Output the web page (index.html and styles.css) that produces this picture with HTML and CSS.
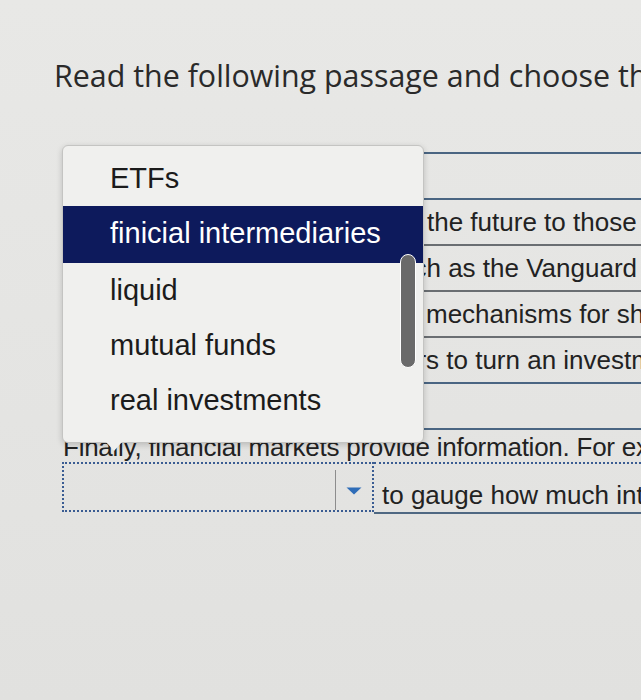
FILE: index.html
```html
<!DOCTYPE html>
<html lang="en">
<head>
<meta charset="utf-8">
<title>Passage question</title>
<link rel="stylesheet" href="styles.css">
</head>
<body>
<main class="page">
  <h1 class="title">Read the following passage and choose the best answer for each blank.</h1>
  <section class="passage">
    <div class="row blue"></div>
    <div class="row blue"><span class="line line-a">the future to those who need funds today.</span></div>
    <div class="row"><span class="line line-b">such as the Vanguard 500 Index Fund,</span></div>
    <div class="row"><span class="line line-c">mechanisms for sharing risk.</span></div>
    <div class="row"><span class="line line-d">investors to turn an investment into cash.</span></div>
    <div class="row blue"></div>
    <div class="row blue row-plain"><span class="line line-e">Finally, financial markets provide information. For example,</span></div>
    <div class="select-row">
      <div class="select">
        <span class="select-value"></span>
        <span class="select-arrow"><svg width="16" height="8" viewBox="0 0 16 8"><path d="M0.5 0.5 L15.5 0.5 L8 7.5 Z" fill="#2f6db8"/></svg></span>
      </div>
      <div class="after"><span class="line">to gauge how much interest rates will change.</span></div>
    </div>

    <div class="menu" role="listbox">
      <div class="option">ETFs</div>
      <div class="option selected">finicial intermediaries</div>
      <div class="option">liquid</div>
      <div class="option">mutual funds</div>
      <div class="option">real investments</div>
      <div class="thumb"></div>
      <div class="notch"></div>
    </div>
  </section>
</main>
</body>
</html>
```
FILE: styles.css
```css
html, body {
  margin: 0;
  padding: 0;
}
body {
  width: 641px;
  height: 700px;
  overflow: hidden;
  background: linear-gradient(180deg, #e8e8e6 0%, #e4e4e2 60%, #e1e1df 100%);
  font-family: "Liberation Sans", Arial, sans-serif;
  color: #222;
}
.page {
  width: 641px;
}
.title {
  margin: 58px 0 0 0;
  padding-left: 54px;
  font-family: "Open Sans", "Noto Sans", sans-serif;
  font-weight: 400;
  font-size: 30.4px;
  line-height: 36px;
  color: #2a2a2a;
  white-space: nowrap;
  overflow: hidden;
}
.passage {
  position: relative;
  margin-top: 58px;
}
.row {
  height: 44px;
  margin-left: 62px;
  border-top: 2px solid #6a6e72;
  display: flex;
  align-items: center;
  white-space: nowrap;
  overflow: hidden;
  font-size: 26px;
  line-height: 44px;
}
.row.blue {
  border-top-color: #4a6582;
}
.line {
  white-space: nowrap;
}
.line-a { padding-left: 365px; }
.line-b { padding-left: 324px; }
.line-c { padding-left: 364px; }
.line-d { padding-left: 273px; }
.row-plain {
  height: 30px;
  padding-top: 2px;
  line-height: 30px;
  align-items: flex-start;
}
.line-e {
  padding-left: 1px;
  letter-spacing: -0.25px;
}
.select-row {
  display: flex;
  height: 52px;
}
.select {
  width: 308px;
  height: 46px;
  margin-left: 62px;
  border: 2px dotted #3a5c92;
  display: flex;
  justify-content: flex-end;
}
.select-arrow {
  width: 36px;
  border-left: 1px solid #8d8d8d;
  margin-top: 6px;
  display: flex;
  align-items: center;
  justify-content: center;
  padding-top: 2px;
}
.after {
  flex: 1;
  height: 33px;
  border-top: 2px dotted #3a5c92;
  border-bottom: 2px solid #4f6882;
  font-size: 26px;
  line-height: 33px;
  padding-left: 8px;
  padding-top: 15px;
  box-sizing: content-box;
  white-space: nowrap;
  overflow: hidden;
}
.menu {
  position: absolute;
  left: 62px;
  top: -7px;
  width: 362px;
  height: 298px;
  padding-top: 5px;
  box-sizing: border-box;
  background: #f0f0ee;
  border: 1px solid #c4c4c2;
  border-radius: 6px;
  box-shadow: 0 2px 6px rgba(0, 0, 0, 0.18);
  font-size: 29px;
  color: #1b1b1b;
  z-index: 2;
}
.option {
  height: 55px;
  line-height: 55px;
  padding-left: 47px;
  white-space: nowrap;
}
.option.selected {
  height: 57px;
  line-height: 55px;
  background: #0d1a5c;
  color: #ffffff;
}
.thumb {
  position: absolute;
  left: 337px;
  top: 108px;
  width: 14px;
  height: 112px;
  background: #6a6a6a;
  border: 1px solid #ffffff;
  border-radius: 8px;
}
.notch {
  position: absolute;
  left: 43px;
  bottom: -9px;
  width: 0;
  height: 0;
  border-left: 8px solid transparent;
  border-right: 8px solid transparent;
  border-top: 9px solid #f0f0ee;
}
```
